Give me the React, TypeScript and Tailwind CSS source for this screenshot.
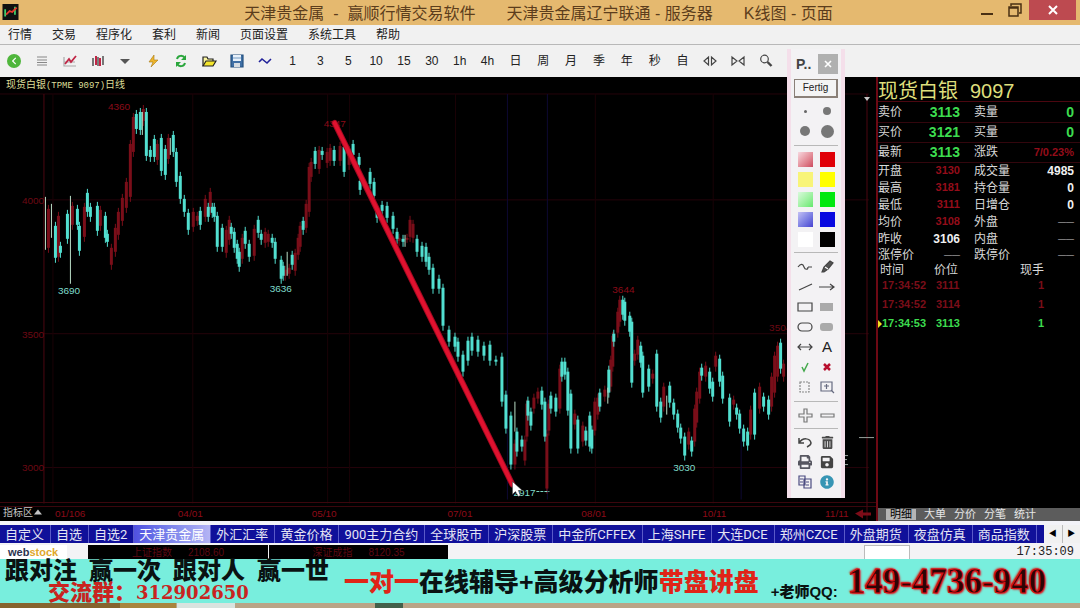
import type { ReactNode } from "react";
import {
  FaChevronLeft,
  FaTrashAlt,
  FaSave,
  FaPrint,
  FaInfoCircle,
} from "react-icons/fa";

const MENUS = ["行情", "交易", "程序化", "套利", "新闻", "页面设置", "系统工具", "帮助"];

const PERIODS = ["1", "3", "5", "10", "15", "30", "1h", "4h", "日", "周", "月", "季", "年", "秒", "自"];

const MARKETS = [
  "自定义", "自选", "自选2", "天津贵金属", "外汇汇率", "黄金价格", "900主力合约", "全球股市",
  "沪深股票", "中金所CFFEX", "上海SHFE", "大连DCE", "郑州CZCE", "外盘期货", "夜盘仿真", "商品指数",
];

type Candle = [x: number, high: number, low: number];

const FALLING: Candle[] = [
  [55, 222, 263], [60, 242, 258], [67, 210, 244], [77, 205, 230], [79, 222, 256],
  [87, 189, 217], [90, 203, 222], [97, 202, 236], [105, 212, 243], [107, 230, 247],
  [136, 110, 134], [140, 108, 135], [146, 108, 161], [150, 146, 162], [154, 135, 162], [161, 134, 176],
  [165, 145, 180], [173, 131, 157], [176, 148, 187], [180, 172, 204], [184, 195, 217], [188, 209, 235],
  [200, 207, 230], [208, 203, 222], [212, 203, 218], [214, 203, 222], [217, 212, 252], [222, 224, 252],
  [231, 223, 239], [234, 228, 253], [237, 240, 264], [239, 248, 272], [245, 227, 249], [249, 240, 262],
  [258, 216, 238], [261, 230, 245], [272, 234, 248], [275, 238, 264], [281, 256, 284], [283, 262, 281],
  [292, 251, 270], [303, 217, 235], [315, 147, 169], [322, 147, 160], [334, 146, 166], [344, 143, 177],
  [353, 140, 160], [359, 153, 170], [360, 177, 195], [370, 168, 189], [374, 178, 201], [377, 207, 223],
  [382, 201, 216], [387, 202, 223], [393, 212, 234], [397, 228, 244], [403, 235, 247], [417, 235, 257],
  [422, 242, 262], [426, 243, 267], [429, 253, 275], [433, 264, 294], [439, 275, 294], [443, 284, 331],
  [449, 326, 347], [455, 333, 352], [458, 338, 362], [463, 351, 377], [468, 337, 366], [472, 333, 356],
  [478, 336, 357], [484, 342, 361], [490, 341, 366], [496, 356, 366], [502, 353, 407], [506, 391, 434],
  [511, 412, 470], [517, 428, 457], [522, 436, 452], [528, 397, 421], [531, 408, 431], [542, 387, 410],
  [545, 398, 442], [551, 392, 414], [556, 394, 417], [562, 358, 382], [565, 358, 380], [568, 368, 416],
  [571, 390, 454], [578, 416, 454], [586, 427, 446], [590, 412, 452], [592, 426, 454], [600, 389, 412],
  [609, 366, 398], [614, 330, 347], [623, 296, 320], [625, 298, 326], [630, 312, 337], [632, 318, 388],
  [641, 342, 368], [643, 352, 398], [649, 365, 392], [657, 350, 412], [661, 398, 423], [670, 382, 408],
  [674, 399, 420], [678, 410, 433], [681, 424, 444], [685, 433, 461], [692, 437, 457], [702, 364, 381],
  [710, 368, 394], [713, 378, 402], [720, 355, 387], [723, 372, 404], [730, 394, 427], [737, 404, 420],
  [740, 410, 434], [744, 425, 447], [748, 428, 451], [755, 389, 440], [764, 393, 412], [769, 396, 420],
  [781, 339, 374],
];

const RISING: Candle[] = [
  [48, 205, 253], [58, 212, 262], [72, 202, 230], [84, 203, 242], [100, 206, 231], [111, 244, 270],
  [115, 224, 257], [118, 208, 240], [122, 194, 226], [126, 178, 213], [130, 140, 202], [133, 113, 157],
  [143, 105, 126], [157, 140, 165], [168, 134, 164], [193, 208, 232], [197, 212, 226], [205, 195, 222],
  [210, 188, 215], [226, 226, 258], [229, 216, 245], [242, 234, 264], [254, 225, 261], [265, 228, 248],
  [268, 230, 247], [285, 266, 281], [289, 264, 279], [295, 249, 276], [298, 234, 260], [300, 222, 252],
  [306, 200, 233], [309, 163, 217], [311, 158, 182], [319, 146, 174], [327, 148, 168], [330, 144, 166],
  [340, 142, 166], [349, 146, 170], [399, 234, 246], [407, 234, 243], [410, 216, 242], [413, 220, 243],
  [515, 440, 470], [525, 436, 466], [527, 400, 442], [534, 394, 414], [538, 388, 404], [547, 430, 494],
  [549, 400, 436], [560, 365, 414], [575, 410, 430], [583, 422, 447], [595, 398, 436], [598, 394, 420],
  [605, 386, 402], [611, 356, 392], [613, 332, 372], [618, 308, 338], [620, 296, 327], [635, 350, 366],
  [638, 336, 360], [653, 370, 384], [664, 383, 412], [689, 428, 450], [695, 405, 447], [697, 388, 428],
  [700, 368, 404], [706, 362, 382], [716, 352, 372], [734, 396, 410], [751, 406, 440], [760, 383, 414],
  [772, 373, 412], [775, 352, 398], [778, 342, 382], [784, 360, 382],
];

// wicks without a visible body
const PALE: Candle[] = [
  [45, 197, 250], [51, 204, 238], [70, 196, 284], [142, 112, 135], [170, 138, 155], [287, 252, 276],
  [405, 235, 247], [515, 402, 432], [608, 388, 404], [667, 396, 415],
];

interface IconButtonProps {
  label: string;
  children: ReactNode;
}

const ToolButton = ({ label, children }: IconButtonProps) => (
  <button
    type="button"
    aria-label={label}
    className="flex h-6 flex-1 items-center justify-center text-[12px] leading-none text-[#222]"
  >
    {children}
  </button>
);

const Glyph = ({ children }: { children: ReactNode }) => (
  <svg viewBox="0 0 16 16" className="h-4 w-4" fill="none" stroke="#444" strokeWidth="1.2">
    {children}
  </svg>
);

const TitleBar = () => (
  <header className="flex h-[25px] shrink-0 items-start bg-[#e5b96f] text-[#5c3d1c]">
    <svg viewBox="0 0 18 18" className="mt-1 ml-0.5 h-4 w-[17px]">
      <rect width="18" height="18" fill="#111" />
      <path d="M3 6v8M14 3v9" stroke="#3fd06a" strokeWidth="2" />
      <path d="M4 12l4-4 3 1 5-5" stroke="#e63b2e" strokeWidth="2" fill="none" />
    </svg>
    <h1 className="flex-1 pl-[183px] text-center text-[16px] leading-[27px] whitespace-pre">
      {"天津贵金属  -  赢顺行情交易软件       天津贵金属辽宁联通 - 服务器       K线图 - 页面"}
    </h1>
    <div className="ml-[98px] flex shrink-0 items-start">
      <button type="button" aria-label="最小化" className="flex h-5 w-7 items-center justify-center">
        <svg viewBox="0 0 14 14" className="h-3.5 w-3.5">
          <path d="M1 11h12" stroke="#4a3013" strokeWidth="2" />
        </svg>
      </button>
      <button type="button" aria-label="还原" className="flex h-5 w-7 items-center justify-center">
        <svg viewBox="0 0 14 14" className="h-3.5 w-3.5" fill="none" stroke="#4a3013">
          <path d="M3 3V1h10v9h-2" strokeWidth="1.5" />
          <path d="M1 4h9v9H1zM1 5h9" strokeWidth="1.5" />
        </svg>
      </button>
      <button type="button" aria-label="关闭" className="flex h-5 w-[47px] items-center justify-center bg-[#bd4a50]">
        <svg viewBox="0 0 10 10" className="h-2.5 w-2.5">
          <path d="M1 1l8 8M9 1L1 9" stroke="#fff" strokeWidth="2" />
        </svg>
      </button>
      <div className="w-1" />
    </div>
  </header>
);

const Toolbar = () => (
  <div className="flex h-[32px] shrink-0 items-center bg-[#f1f1f1]">
    <div className="flex w-[780px] items-center">
      <ToolButton label="后退">
        <span className="flex h-3.5 w-3.5 items-center justify-center rounded-full bg-[#4fb63c]">
          <FaChevronLeft size={8} color="#fff" />
        </span>
      </ToolButton>
      <ToolButton label="报价">
        <Glyph>
          <path d="M3 4h10M3 7h10M3 9.500h10M3 12h10" stroke="#888" />
        </Glyph>
      </ToolButton>
      <ToolButton label="分时图">
        <Glyph>
          <path d="M2 4v9h12M2 9h11" stroke="#aaa" />
          <path d="M3 11l4-5 2 3 5-6" stroke="#c02545" strokeWidth="1.8" />
        </Glyph>
      </ToolButton>
      <ToolButton label="K线图">
        <Glyph>
          <path d="M3 5v8M13 3v9" stroke="#777" strokeWidth="2" />
          <path d="M6 3v9M10 5v8" stroke="#c02545" strokeWidth="2" />
          <path d="M8 4v9" stroke="#333" />
        </Glyph>
      </ToolButton>
      <ToolButton label="更多">
        <Glyph>
          <path d="M3 6h10l-5 5z" fill="#555" stroke="none" />
        </Glyph>
      </ToolButton>
      <ToolButton label="闪电下单">
        <Glyph>
          <path d="M9 2L4 9h4l-2 5 7-7H9z" fill="#eeb52b" stroke="#a67816" strokeWidth="0.6" />
        </Glyph>
      </ToolButton>
      <ToolButton label="刷新">
        <Glyph>
          <path d="M4 6c1-4 6-4 8-1M12 10c-1 4-6 4-8 1" stroke="#2aa63c" strokeWidth="2" />
          <path d="M13 2v5H8zM3 14V9h5z" fill="#2aa63c" stroke="none" />
        </Glyph>
      </ToolButton>
      <ToolButton label="打开">
        <Glyph>
          <path d="M2 13V4h4l1 2h5v2" fill="#fbf6a0" stroke="#222" />
          <path d="M2 13l3-5h10l-3 5z" fill="#f4e52c" stroke="#222" />
        </Glyph>
      </ToolButton>
      <ToolButton label="保存">
        <Glyph>
          <path d="M2 2h12v12H2z" fill="#3f6fa5" stroke="#24507f" />
          <path d="M4 2h8v6H4z" fill="#e8f1fa" stroke="none" />
          <path d="M4 5h8" stroke="#86a9cb" />
          <path d="M5 10h6v4H5z" fill="#d6dce2" stroke="none" />
        </Glyph>
      </ToolButton>
      <ToolButton label="画线">
        <Glyph>
          <path d="M2 9l3-3 5 4 4-4" stroke="#22229a" strokeWidth="1.6" />
        </Glyph>
      </ToolButton>
      {PERIODS.map((period) => (
        <ToolButton key={period} label={period}>
          {period}
        </ToolButton>
      ))}
      <ToolButton label="拉伸">
        <Glyph>
          <path d="M6.500 4v8L2 8zM9.500 4v8L14 8z" />
        </Glyph>
      </ToolButton>
      <ToolButton label="压缩">
        <Glyph>
          <path d="M2 4v8l5-4zM14 4v8L9 8z" />
        </Glyph>
      </ToolButton>
      <ToolButton label="放大镜">
        <Glyph>
          <circle cx="6.500" cy="6" r="3.800" />
          <path d="M9.500 9l4 4" strokeWidth="2.400" />
        </Glyph>
      </ToolButton>
    </div>
  </div>
);

const Candles = ({ data, color }: { data: Candle[]; color: string }) => (
  <g fill={color}>
    {data.map(([x, high, low]) => (
      <g key={`${x}-${high}`}>
        <rect x={x} y={high} width={1} height={low - high} />
        <rect x={x - 1} y={high + 4} width={3} height={Math.max(low - high - 9, 2)} />
      </g>
    ))}
  </g>
);

const Chart = () => (
  <svg
    viewBox="0 77 877 444"
    preserveAspectRatio="xMinYMin meet"
    className="block h-full w-full font-['Liberation_Sans','Noto_Sans_CJK_SC',sans-serif]"
  >
    <g stroke="#25030a" strokeWidth="1">
      <path d="M0 94H870M44 200H870M44 334H870M44 468H870" />
      <path d="M53 94V504M193 94V504M328 94V504M350 94V504M456 94V504M596 94V504M714 94V504" stroke="#1a0206" />
    </g>
    <path d="M508 94V500M548 94V500M742 420V500" stroke="#0d0832" />
    <path d="M44 94V504" stroke="#4c0710" />
    <path d="M0 503H877M0 507H877" stroke="#3b060d" />
    <path d="M868 94V521" stroke="#4c0710" />

    <text x="6" y="88" fontSize="10" fill="#dede98">
      现货白银<tspan fontFamily="Liberation Mono" fontSize="9">(TPME 9097)</tspan>日线
    </text>

    <g fill="#6d0914" fontSize="10" fontFamily="Liberation Sans">
      <text x="22" y="204">4000</text>
      <text x="22" y="338">3500</text>
      <text x="22" y="471">3000</text>
      <text x="770" y="331">3504</text>
    </g>
    <g fill="#8c0b18" fontSize="10">
      <text x="108" y="110">4360</text>
      <text x="324" y="127">4347</text>
      <text x="613" y="293">3644</text>
      <text x="55" y="518">01/106</text>
      <text x="178" y="518">04/01</text>
      <text x="312" y="518">05/10</text>
      <text x="448" y="518">07/01</text>
      <text x="582" y="518">08/01</text>
      <text x="703" y="518">10/11</text>
      <text x="826" y="518">11/11</text>
    </g>

    <Candles data={RISING} color="#7a0e19" />
    <Candles data={FALLING} color="#52dfd0" />
    <g fill="#b9ddc6">
      {PALE.map(([x, high, low]) => (
        <rect key={x} x={x} y={high} width={1} height={low - high} />
      ))}
    </g>

    <g fill="#7fdccb" fontSize="10">
      <text x="58" y="294">3690</text>
      <text x="270" y="292">3636</text>
      <text x="674" y="471">3030</text>
      <text x="514" y="496">2917</text>
    </g>
    <path d="M537 492h13" stroke="#7fdccb" strokeDasharray="3 1" />

    <path d="M335 123L513 485" stroke="#a30a22" strokeWidth="6" strokeLinecap="round" />
    <path d="M335 123L513 485" stroke="#e0122f" strokeWidth="4" strokeLinecap="round" />
    <path d="M513 482v13l3-3 3 5 2-1-2-5h4z" fill="#fff" stroke="#222" strokeWidth="0.5" />

    <text x="3" y="517" fontSize="10" fill="#c4c4c4">指标区</text>
    <path d="M34 515l4-5 4 5z" fill="#c4c4c4" />
    <path d="M860 438h15M845 456h4M845 460h3M845 465h4" stroke="#9aa29e" />
    <path d="M865 97h6l-3 4z" fill="#c4c4c4" />
    <path d="M856 514l8-4v3h8v3h-8v3z" fill="#7d0c18" />
  </svg>
);

interface QuoteRow {
  left: string;
  price: string;
  priceClass: string;
  right: string;
  amount: string;
  amountClass: string;
  rowClass: string;
}

const GREEN = "text-[#3ddc4f] font-bold text-[14px]";
const RED = "text-[#940d1a] font-bold text-[11px]";
const WHITE = "text-[#f0f0f0] font-bold text-[12px]";
const TALL = "h-5 border-b border-[#33060d]";
const SHORT = "h-[17px]";

const QUOTES: QuoteRow[] = [
  { left: "卖价", price: "3113", priceClass: GREEN, right: "卖量", amount: "0", amountClass: GREEN, rowClass: TALL },
  { left: "买价", price: "3121", priceClass: GREEN, right: "买量", amount: "0", amountClass: GREEN, rowClass: TALL },
  { left: "最新", price: "3113", priceClass: GREEN, right: "涨跌", amount: "7/0.23%", amountClass: RED, rowClass: TALL },
  { left: "开盘", price: "3130", priceClass: RED, right: "成交量", amount: "4985", amountClass: WHITE, rowClass: SHORT },
  { left: "最高", price: "3181", priceClass: RED, right: "持仓量", amount: "0", amountClass: WHITE, rowClass: SHORT },
  { left: "最低", price: "3111", priceClass: RED, right: "日增仓", amount: "0", amountClass: WHITE, rowClass: SHORT },
  { left: "均价", price: "3108", priceClass: RED, right: "外盘", amount: "——", amountClass: "text-[8px]", rowClass: SHORT },
  { left: "昨收", price: "3106", priceClass: WHITE, right: "内盘", amount: "——", amountClass: "text-[8px]", rowClass: SHORT },
  { left: "涨停价", price: "——", priceClass: "text-[8px]", right: "跌停价", amount: "——", amountClass: "text-[8px]", rowClass: "h-4" },
];

const TRADES = [
  { time: "17:34:52", price: "3111", color: "text-[#7a0e19]" },
  { time: "17:34:52", price: "3114", color: "text-[#7a0e19]" },
  { time: "17:34:53", price: "3113", color: "text-[#3ddc4f]" },
];

const QuotePanel = () => (
  <aside className="flex w-[204px] shrink-0 flex-col border-l-2 border-[#6d0914] bg-black text-[12px] text-[#d8d8d8]">
    <h2 className="flex h-[25px] shrink-0 items-center gap-3 border-b border-[#4c0710] pt-1 text-[20px] leading-none text-[#dede7c]">
      现货白银 <span>9097</span>
    </h2>
    <table className="w-full table-fixed leading-none">
      <tbody>
        {QUOTES.map((row) => (
          <tr key={row.left} className={row.rowClass}>
            <th scope="row" className="w-[46px] p-0 text-left font-normal whitespace-nowrap">{row.left}</th>
            <td className={`w-[36px] p-0 text-right ${row.priceClass}`}>{row.price}</td>
            <th scope="row" className="w-[60px] py-0 pr-0 pl-3.5 text-left font-normal whitespace-nowrap">{row.right}</th>
            <td className={`py-0 pr-1.5 pl-0 text-right ${row.amountClass}`}>{row.amount}</td>
          </tr>
        ))}
      </tbody>
    </table>
    <table className="w-full table-fixed leading-none">
      <thead>
        <tr className="h-[13px]">
          <th className="w-[56px] p-0 pl-0.5 text-left font-normal">时间</th>
          <th className="w-[42px] p-0 text-left font-normal">价位</th>
          <th className="p-0 pl-11 text-left font-normal">现手</th>
        </tr>
      </thead>
      <tbody>
        {TRADES.map((trade, i) => (
          <tr key={i} className={`h-[19px] font-bold ${trade.color}`}>
            <td className="p-0 text-[11px]">
              <span className="flex items-center">
                <span className={`h-0 w-0 border-y-4 border-l-4 border-y-transparent ${i === 2 ? "border-l-[#f0e020]" : "border-l-transparent"}`} />
                {trade.time}
              </span>
            </td>
            <td className="p-0 pl-0.5 text-[11px]">{trade.price}</td>
            <td className="p-0 pl-[62px] text-[11px]">1</td>
          </tr>
        ))}
      </tbody>
    </table>
    <div className="mt-auto flex h-[13px] shrink-0 items-center gap-2 bg-[#5c5c5c] pl-2 text-[11px] leading-none text-[#e6e6e6]">
      {["明细", "大单", "分价", "分笔", "统计"].map((tab, i) => (
        <button key={tab} type="button" className={i === 0 ? "bg-[#b5b5b5] px-1 text-black" : ""}>
          {tab}
        </button>
      ))}
    </div>
  </aside>
);

const PaletteButton = ({ label, children }: IconButtonProps) => (
  <button type="button" aria-label={label} className="flex h-5 items-center justify-center">
    {children}
  </button>
);

const COLORS = [
  { name: "浅红", style: "bg-linear-to-br from-[#f6d8e0] to-[#cc4a60]" },
  { name: "红", style: "bg-[#e00008]" },
  { name: "浅黄", style: "bg-[#f8f478]" },
  { name: "黄", style: "bg-[#ffff00]" },
  { name: "浅绿", style: "bg-linear-to-br from-[#d8fadb] to-[#62e86c]" },
  { name: "绿", style: "bg-[#00e810]" },
  { name: "浅蓝", style: "bg-linear-to-br from-[#c4c0f4] to-[#4a40d0]" },
  { name: "蓝", style: "bg-[#0808e0]" },
  { name: "白", style: "bg-white" },
  { name: "黑", style: "bg-black" },
];

const DrawingPalette = () => (
  <section className="absolute top-[49px] left-[787px] flex w-[58px] flex-col border-x-4 border-[#f4dfea] bg-[#f3f2f4] px-[3px] pb-1.5 font-['Liberation_Sans',sans-serif]">
    <div className="flex h-[30px] items-center justify-between pl-0.5">
      <span className="text-[14px] font-bold text-[#444]">P..</span>
      <button type="button" aria-label="Schließen" className="flex h-5 w-5 items-center justify-center bg-[#b0b0b0]">
        <svg viewBox="0 0 8 8" className="h-2 w-2">
          <path d="M1 1l6 6M7 1L1 7" stroke="#fff" strokeWidth="1.6" />
        </svg>
      </button>
    </div>
    <button type="button" className="h-[19px] border border-r-2 border-b-2 border-[#8a8078] bg-[#f4f4f4] text-[10px] leading-none text-[#222]">
      Fertig
    </button>
    <div className="mt-[3px] grid grid-cols-2 border-b border-[#b8b8b8] pb-1">
      <PaletteButton label="1 px"><span className="h-[3px] w-[3px] rounded-full bg-[#666]" /></PaletteButton>
      <PaletteButton label="3 px"><span className="h-2 w-2 rounded-full bg-[#777]" /></PaletteButton>
      <PaletteButton label="5 px"><span className="h-2.5 w-2.5 rounded-full bg-[#777]" /></PaletteButton>
      <PaletteButton label="7 px"><span className="h-[13px] w-[13px] rounded-full bg-[#777]" /></PaletteButton>
    </div>
    <div className="grid grid-cols-2 border-b border-[#b8b8b8] py-[3px]">
      {COLORS.map((color) => (
        <PaletteButton key={color.name} label={color.name}>
          <span className={`h-[15px] w-[15px] ${color.style}`} />
        </PaletteButton>
      ))}
    </div>
    <div className="grid grid-cols-2 border-b border-[#b8b8b8] py-1">
      <PaletteButton label="Freihand"><Glyph><path d="M1 8c3-4 5-3 6 0s4 3 4 0M11 8h4" /></Glyph></PaletteButton>
      <PaletteButton label="Marker"><Glyph><path d="M3 13l2-5 6-6 3 2-5 6-4 3z" fill="#555" /><path d="M6 8l3 2" stroke="#fff" /></Glyph></PaletteButton>
      <PaletteButton label="Linie"><Glyph><path d="M2 11L15 5" /></Glyph></PaletteButton>
      <PaletteButton label="Pfeil"><Glyph><path d="M0 8h14M11 5l4 3-4 3" /></Glyph></PaletteButton>
      <PaletteButton label="Rechteck"><Glyph><path d="M1 4h14v8H1z" /></Glyph></PaletteButton>
      <PaletteButton label="Rechteck gefüllt"><Glyph><path d="M1 4h13v8H1z" fill="#aaa" stroke="none" /></Glyph></PaletteButton>
      <PaletteButton label="Ellipse"><Glyph><rect x="1" y="4" width="14" height="8" rx="4" /></Glyph></PaletteButton>
      <PaletteButton label="Ellipse gefüllt"><Glyph><rect x="1" y="4" width="13" height="8" rx="3" fill="#aaa" stroke="none" /></Glyph></PaletteButton>
      <PaletteButton label="Doppelpfeil"><Glyph><path d="M1 8h14M4 5L1 8l3 3M12 5l3 3-3 3" /></Glyph></PaletteButton>
      <PaletteButton label="Text"><span className="text-[15px] text-[#222]">A</span></PaletteButton>
      <PaletteButton label="Haken"><Glyph><path d="M5 8l2 4 4-8" stroke="#43a84c" strokeWidth="1.5" /></Glyph></PaletteButton>
      <PaletteButton label="Kreuz"><Glyph><path d="M5 5l6 6M11 5l-6 6" stroke="#b80f2e" strokeWidth="2.500" /></Glyph></PaletteButton>
      <PaletteButton label="Ausschnitt"><Glyph><path d="M3 3h9v10H3z" stroke="#888" strokeDasharray="2 1" /></Glyph></PaletteButton>
      <PaletteButton label="Zoom"><Glyph><path d="M2 3h11v9H2zM5 7h5M7.500 5v5M12 11l3 3" stroke="#666b80" /></Glyph></PaletteButton>
    </div>
    <div className="grid grid-cols-2 border-b border-[#b8b8b8] py-[3px]">
      <PaletteButton label="Plus"><Glyph><path d="M7 2h3v5h5v3h-5v5H7v-5H2V7h5z" stroke="#777" /></Glyph></PaletteButton>
      <PaletteButton label="Minus"><Glyph><path d="M2 7h13v3H2z" stroke="#777" /></Glyph></PaletteButton>
    </div>
    <div className="grid grid-cols-2 pt-[3px]">
      <PaletteButton label="Rückgängig"><Glyph><path d="M2 4v5h5M2 9c4-6 11-5 12 0 0 2-2 3-4 4" strokeWidth="1.500" /></Glyph></PaletteButton>
      <PaletteButton label="Löschen"><FaTrashAlt size={13} color="#4a4a4a" /></PaletteButton>
      <PaletteButton label="Drucken"><FaPrint size={14} color="#565660" /></PaletteButton>
      <PaletteButton label="Speichern"><FaSave size={14} color="#444" /></PaletteButton>
      <PaletteButton label="Kopieren"><Glyph><path d="M2 2h6v9H2zM7 5h7v9H7zM9 8h3M9 11h3M3 5h3M3 8h3" stroke="#4b4b80" /></Glyph></PaletteButton>
      <PaletteButton label="Info"><FaInfoCircle size={14} color="#3795b4" /></PaletteButton>
    </div>
  </section>
);

const MarketTabs = () => (
  <nav className="flex h-[18px] shrink-0 items-stretch bg-[#10109a] font-['Roboto','Noto_Sans_CJK_SC',sans-serif]">
    <div className="flex min-w-0 flex-1 overflow-hidden">
      {MARKETS.map((market) => (
        <button
          key={market}
          type="button"
          className={`shrink-0 border-r border-[#5a5ac8] pr-[6px] pl-[5px] text-[13px] leading-none whitespace-nowrap ${
            market === "天津贵金属" ? "bg-linear-to-r from-[#5050e0] to-[#b4b4f4] text-white" : "text-[#e4e4f4]"
          }`}
        >
          {market}
        </button>
      ))}
    </div>
    <div className="flex w-9 shrink-0 bg-[#f1f1f1] text-[8px] text-black">
      <button type="button" aria-label="向左" className="flex-1 border-r border-[#bbb]">◀</button>
      <button type="button" aria-label="向右" className="flex-1">▶</button>
    </div>
  </nav>
);

const StatusBar = () => (
  <div className="flex h-[16px] shrink-0 items-stretch overflow-hidden bg-[#f3f3f5] pt-0.5">
    <div className="w-[67px] bg-white pl-2 text-[11px] leading-[15px] font-bold text-[#2c3350]">
      web<span className="text-[#e0a72c]">stock</span>
    </div>
    <div className="ml-[21px] flex w-[180px] justify-center gap-4 bg-black text-[10px] leading-[15px] text-[#5e0812]">
      <span>上证指数</span>
      <span>2108.60</span>
    </div>
    <div className="ml-px flex w-[179px] justify-center gap-4 bg-black text-[10px] leading-[15px] text-[#5e0812]">
      <span>深证成指</span>
      <span>8120.35</span>
    </div>
    <div className="ml-auto w-[46px] border border-b-0 border-[#bbb] bg-white" />
    <time className="ml-[106px] pr-1.5 font-['Liberation_Mono',monospace] text-[12px] leading-[15px] text-[#222]">
      17:35:09
    </time>
  </div>
);

const Banner = () => (
  <footer className="flex h-[44px] shrink-0 bg-[#78eedd] leading-none font-black text-[#0a1212]">
    <div className="w-[344px] shrink-0 pl-[5px]">
      <p className="flex gap-3 text-[24px] leading-[23px] whitespace-nowrap">
        <span>跟对注</span>
        <span>赢一次</span>
        <span>跟对人</span>
        <span>赢一世</span>
      </p>
      <p className="flex items-center pl-[43px] text-[22px] leading-[21px] whitespace-nowrap text-[#c8241f]">
        交流群：<span className="font-['DejaVu_Serif',serif] text-[18px] font-bold">312902650</span>
      </p>
    </div>
    <p className="shrink-0 text-[25px] leading-[46px] whitespace-nowrap">
      <span className="text-[#e02418]">一对一</span>在线辅导+高级分析师<span className="text-[#e02418]">带盘讲盘</span>
    </p>
    <p className="shrink-0 self-end pb-1 pl-3 text-[15px] whitespace-nowrap">+老师QQ:</p>
    <p className="shrink-0 pl-2.5 font-['Liberation_Serif',serif] text-[35px] leading-[45px] font-bold whitespace-nowrap text-[#2c0405] [-webkit-text-stroke:1px_#d80f14] [text-shadow:1px_1px_2px_#e01014,-1px_-1px_2px_#e01014]">
      149-4736-940
    </p>
  </footer>
);

export default function App() {
  return (
    <div className="relative flex h-screen flex-col overflow-hidden bg-[#f1f1f1] font-['Liberation_Sans','Noto_Sans_CJK_SC',sans-serif]">
      <TitleBar />
      <nav className="flex h-[20px] shrink-0 items-center gap-5 border-b border-[#b8b8b8] bg-[#f1f1f1] pl-2 text-[12px] leading-none text-[#222]">
        {MENUS.map((menu) => (
          <button key={menu} type="button" className="whitespace-nowrap">{menu}</button>
        ))}
      </nav>
      <Toolbar />
      <main className="flex min-h-0 flex-1 bg-black">
        <div className="min-w-0 flex-1">
          <Chart />
        </div>
        <QuotePanel />
      </main>
      <div className="h-[4px] shrink-0 bg-[#f3f3f8]" />
      <MarketTabs />
      <StatusBar />
      <Banner />
      <div className="flex h-[5px] shrink-0 bg-[#b9a487]">
        <div className="w-[120px] bg-[#86632e]" />
        <div className="w-[56px] bg-[#a8853e]" />
        <div className="ml-px w-[58px] bg-[#d9e3df]" />
        <div className="ml-[140px] w-[28px] bg-[#43604a]" />
      </div>
      <DrawingPalette />
    </div>
  );
}
